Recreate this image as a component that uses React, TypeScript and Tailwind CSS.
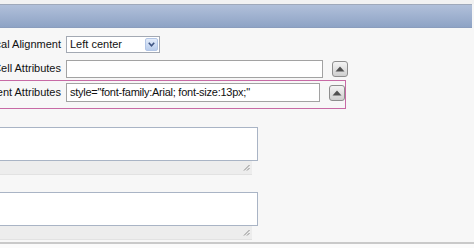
import React from "react";

function UpButton() {
  return (
    <div className="ml-[5px] flex h-[16px] w-[16px] items-center justify-center rounded-[3px] border border-[#8e8e8e] bg-gradient-to-b from-[#f4f4f4] to-[#cfcfcf]">
      <svg width="10" height="6" viewBox="0 0 10 6">
        <polygon points="5,0.5 9.5,5.5 0.5,5.5" fill="#505050" />
      </svg>
    </div>
  );
}

function Label({ text }: { text: string }) {
  return (
    <div className="flex w-[62px] shrink-0 justify-end overflow-hidden whitespace-nowrap pr-[1px] text-[#111]">
      <span>{text}</span>
    </div>
  );
}

function TextArea({ mt }: { mt: string }) {
  return (
    <div className={mt}>
      <div className="h-[34px] w-[258px] border-y border-r border-[#a9b4c5] bg-white" />
      <div className="relative h-[14px] w-[252px] border-b border-[#e2e2e2] bg-[#ededed]">
        <svg className="absolute right-[2px] top-[3px]" width="7" height="7" viewBox="0 0 7 7">
          <line x1="6.5" y1="1" x2="1" y2="6.5" stroke="#8a8a8a" strokeWidth="1" />
          <line x1="6.5" y1="4" x2="4" y2="6.5" stroke="#8a8a8a" strokeWidth="1" />
        </svg>
      </div>
    </div>
  );
}

export default function App() {
  return (
    <div className="relative h-[248px] w-[474px] overflow-hidden bg-[#f7f7f7] font-['Liberation_Sans',Arial,sans-serif] text-[11px]">
      <div className="h-[4px] bg-[#f2f2f2]" />
      <div className="mr-[2px] h-[24px] border-t border-[#9fa9ba] bg-gradient-to-b from-[#b1c0da] to-[#8ea3c5] border-b border-b-[#8a9dbd]" />

      <div className="flex flex-col">
        <div className="mt-[8px] flex h-[17px] items-center gap-[4px]">
          <Label text="Vertical Alignment" />
          <div className="flex h-[17px] w-[94px] items-center justify-between border border-[#a3a9b3] bg-white pl-[3px]">
            <span className="text-[#111]">Left center</span>
            <div className="mr-[1px] flex h-[13px] w-[13px] items-center justify-center rounded-[2px] border border-[#b3c6e6] bg-gradient-to-b from-[#e3ecfa] to-[#b9cdec]">
              <svg width="7" height="5" viewBox="0 0 7 5">
                <polyline points="0.8,0.8 3.5,3.8 6.2,0.8" fill="none" stroke="#3f5583" strokeWidth="1.6" />
              </svg>
            </div>
          </div>
        </div>

        <div className="mt-[7px] flex h-[17px] items-center gap-[4px]">
          <Label text="Cell Attributes" />
          <div className="h-[18px] w-[257px] border border-[#a2a2a2] bg-white" />
          <UpButton />
        </div>

        <div className="mt-[3px] w-[346px] border-y border-r border-[#c76aa5] pb-[6px] pt-[2px]">
          <div className="flex h-[19px] items-center gap-[4px]">
            <Label text="Content Attributes" />
            <div className="flex h-[19px] w-[257px] items-center overflow-hidden border border-[#a2a2a2] bg-white pl-[3px] whitespace-nowrap tracking-[-0.25px] text-[#111]">
              style="font-family:Arial; font-size:13px;"
            </div>
            <UpButton />
          </div>
        </div>

        <TextArea mt="mt-[18px]" />
        <TextArea mt="mt-[17px]" />
      </div>

      <div className="absolute bottom-0 left-0 right-0 h-[6px] border-t-2 border-[#c9c9c9] bg-[#fbfbfb]" />
    </div>
  );
}
